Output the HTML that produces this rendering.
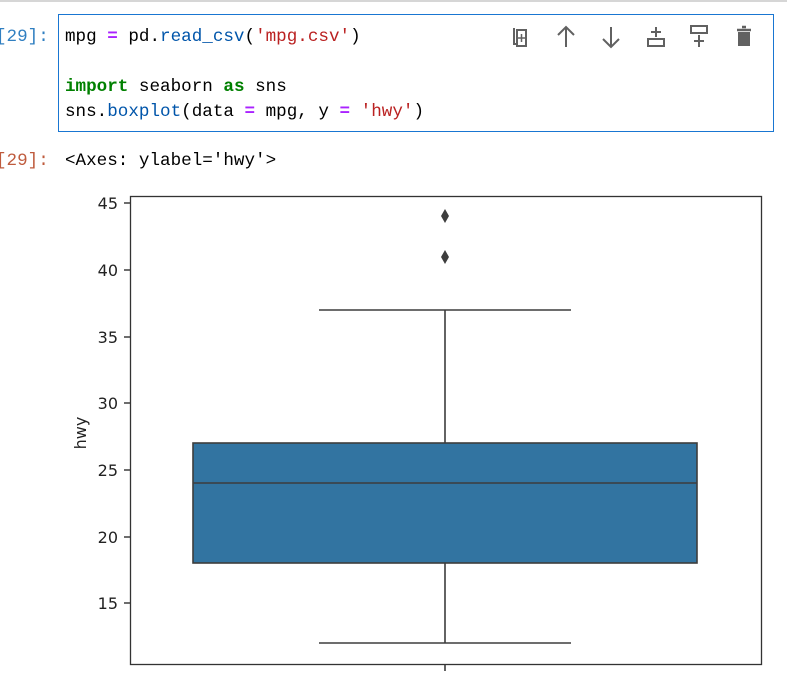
<!DOCTYPE html>
<html><head><style>
body{margin:0;width:787px;height:691px;background:#fff;position:relative;overflow:hidden;font-family:"Liberation Mono","DejaVu Sans Mono",monospace;}
.top{position:absolute;left:0;top:0;width:787px;height:2px;background:#d6d6d6}
.p{position:absolute;font-size:17.6px;line-height:20px}
.cell{position:absolute;left:58px;top:14px;width:714px;height:116px;border:1px solid #1976d2}
.code{position:absolute;left:65px;font-size:17.6px;color:#000;white-space:pre;line-height:20px}
.kw{color:#008000;font-weight:bold}.op{color:#aa22ff;font-weight:bold}.s{color:#ba2121}.fn{color:#0055aa}
</style></head><body>
<div class="top"></div>
<div class="p" style="left:-4px;top:27px;color:#307fc1">[29]:</div>
<div class="cell"></div>
<div class="code" style="top:27px">mpg <span class="op">=</span> pd.<span class="fn">read_csv</span>(<span class="s">'mpg.csv'</span>)</div>
<div class="code" style="top:77px"><span class="kw">import</span> seaborn <span class="kw">as</span> sns</div>
<div class="code" style="top:102px">sns.<span class="fn">boxplot</span>(data <span class="op">=</span> mpg, y <span class="op">=</span> <span class="s">'hwy'</span>)</div>
<svg style="position:absolute;left:505px;top:22px" width="260" height="30" viewBox="0 0 260 30" fill="none" stroke="#616161" stroke-width="2">
<path d="M9 6v16h2M12 8h9v16h-9z"/><path d="M16.5 12v8M12.5 16h8" stroke-width="1.5"/>
<path d="M61 25V5M53 13l8-8 8 8"/>
<path d="M106 5v20M98 17l8 8 8-8"/>
<path d="M143 17h16v7h-16zM151 5v10M146 10h10"/>
<path d="M186 4h16v7h-16zM194 13v12M189 19h10"/>
<path d="M232 8h14M237 5h4" stroke-width="2.5"/><path d="M233 10h12v14h-12z" fill="#616161" stroke="none"/>
</svg>
<div class="p" style="left:-4px;top:151px;color:#bf5b3d">[29]:</div>
<div class="code" style="top:151px">&lt;Axes: ylabel='hwy'&gt;</div>
<svg style="position:absolute;left:0;top:180px" width="787" height="511" viewBox="0 180 787 511" font-family="'DejaVu Sans',sans-serif" font-size="16" fill="#222">
<g stroke="#3d3d3d" stroke-width="1.6">
<rect x="130.5" y="196.5" width="631" height="468" fill="none" stroke="#333" stroke-width="1.3"/>
<path d="M124 203h6M124 270h6M124 337h6M124 403h6M124 470h6M124 537h6M124 603h6M445 665v6"/>
<rect x="193" y="443" width="504" height="120" fill="#3274a1"/>
<path d="M193 483h504M445 443V310M319 310h252M445 563V643M319 643h252"/>
</g>
<path d="M445 209l4 7-4 7-4-7z M445 250l4 7-4 7-4-7z" fill="#3d3d3d"/>
<g text-anchor="end">
<text x="118" y="209">45</text><text x="118" y="276">40</text><text x="118" y="343">35</text><text x="118" y="409">30</text><text x="118" y="476">25</text><text x="118" y="543">20</text><text x="118" y="609">15</text>
</g>
<text transform="translate(86 433) rotate(-90)" text-anchor="middle">hwy</text>
</svg>
</body></html>
